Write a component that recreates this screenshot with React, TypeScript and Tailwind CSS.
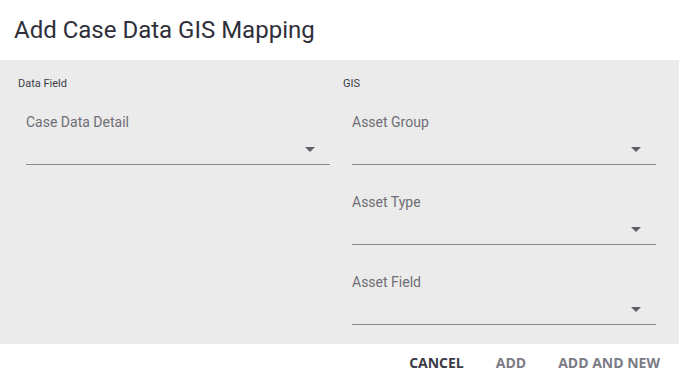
const fieldFont = { fontFamily: "Roboto, 'Liberation Sans', sans-serif" }

const Arrow = () => (
  <svg width="10" height="5" viewBox="0 0 10 5" className="mb-[12px] mr-[15px]">
    <path d="M0 0 L10 0 L5 5 Z" fill="#5f5f66" />
  </svg>
)

const SelectField = ({ label }: { label: string }) => (
  <div className="w-[304px] h-[80px] pt-[18px]">
    <div className="text-[14px] leading-[16px] text-[#6e6e74]">{label}</div>
    <div className="h-[35px] border-b border-[#8b8b90] flex items-end justify-end">
      <Arrow />
    </div>
  </div>
)

export default function App() {
  return (
    <div className="w-[679px] h-[378px] bg-white flex flex-col" style={fieldFont}>
      {/* Header */}
      <div className="h-[60px] flex items-center pl-[14px]">
        <h1 className="text-[24px] text-[#2f2f3b] font-normal">Add Case Data GIS Mapping</h1>
      </div>

      {/* Content */}
      <div className="h-[284px] bg-[#ebebeb] flex pl-[18px] pt-[18px]">
        <div className="w-[325px]">
          <div className="text-[11px] leading-[12px] text-[#3b3b45]">Data Field</div>
          <div className="pl-[8px] pt-[6px]">
            <SelectField label="Case Data Detail" />
          </div>
        </div>
        <div className="w-[325px]">
          <div className="text-[11px] leading-[12px] text-[#3b3b45]">GIS</div>
          <div className="pl-[9px] pt-[6px] flex flex-col">
            <SelectField label="Asset Group" />
            <SelectField label="Asset Type" />
            <SelectField label="Asset Field" />
          </div>
        </div>
      </div>

      {/* Actions */}
      <div
        className="flex-1 flex items-center justify-end pr-[19px] pt-[3px] gap-[32px] text-[14px] font-bold"
        style={{ fontFamily: "'Open Sans', 'Liberation Sans', sans-serif" }}
      >
        <button className="text-[#3a3a46]">CANCEL</button>
        <button className="text-[#7b7b86]">ADD</button>
        <button className="text-[#7b7b86]">ADD AND NEW</button>
      </div>
    </div>
  )
}
